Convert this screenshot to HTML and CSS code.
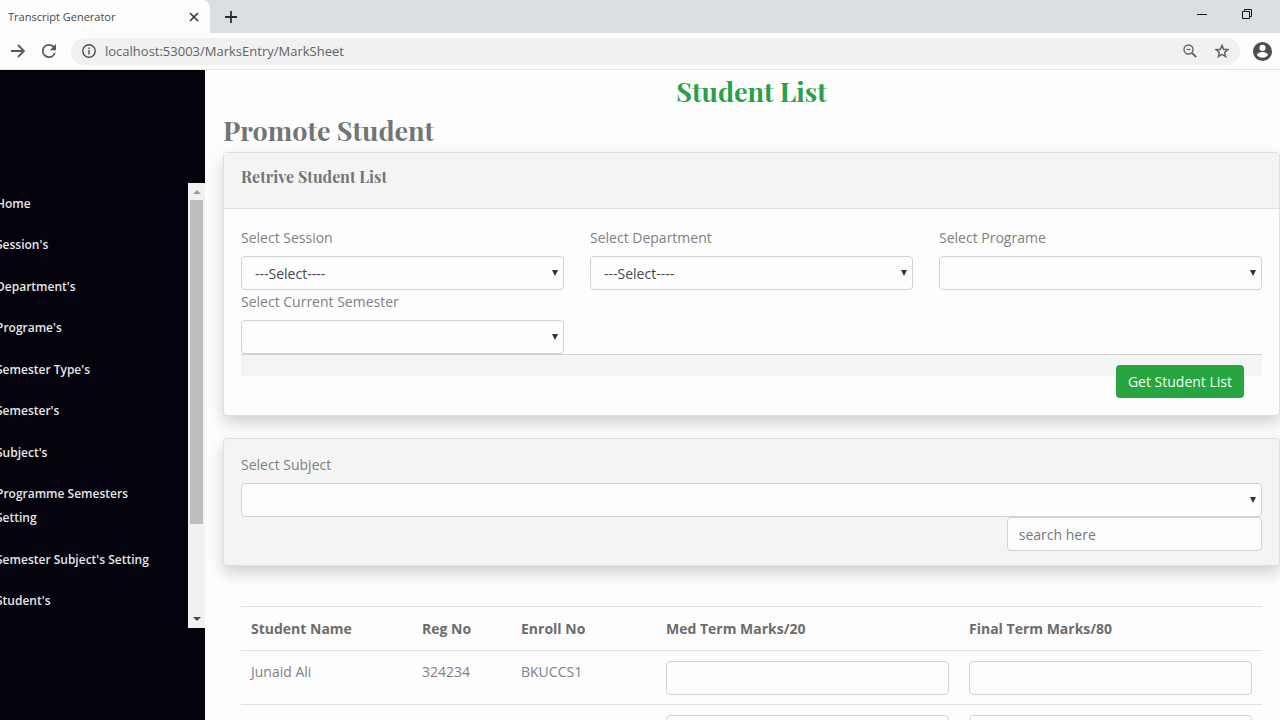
FILE: index.html
```html
<!DOCTYPE html>
<html lang="en">
<head>
    <meta charset="UTF-8">
    <meta name="viewport" content="width=device-width, initial-scale=1.0">
    <title>Transcript Generator</title>
    <link rel="stylesheet" href="styles.css">
</head>
<body>
    <!-- Browser Bar -->
    <header class="browser">
        <div class="tab-strip">
            <div class="tab">
                <span>Transcript Generator</span>
                <button class="icon-btn" aria-label="Close tab">
                    <svg width="10" height="10" viewBox="0 0 10 10" fill="none" stroke="#333" stroke-width="1.6"><path d="M1 1l8 8M9 1l-8 8"/></svg>
                </button>
            </div>
            <button class="icon-btn new-tab" aria-label="New tab">
                <svg width="12" height="12" viewBox="0 0 12 12" fill="none" stroke="#2b2d30" stroke-width="1.8"><path d="M6 0v12M0 6h12"/></svg>
            </button>
            <div class="window-btns">
                <button class="icon-btn" aria-label="Minimize">
                    <svg width="10" height="10" viewBox="0 0 10 10" stroke="#111"><path d="M0 5.5h10"/></svg>
                </button>
                <button class="icon-btn" aria-label="Restore">
                    <svg width="10" height="10" viewBox="0 0 10 10" fill="none" stroke="#111"><path d="M.5 2.5h7v7h-7zM2.5 2.5v-2h7v7h-2"/></svg>
                </button>
            </div>
        </div>
        <div class="toolbar">
            <button class="icon-btn" aria-label="Forward">
                <svg width="14" height="14" viewBox="0 0 14 14" fill="none" stroke="#55585c" stroke-width="1.8"><path d="M0 7h13M7 1l6 6-6 6"/></svg>
            </button>
            <button class="icon-btn" aria-label="Reload">
                <svg width="14" height="14" viewBox="4 4 16 16" fill="#55585c"><path d="M17.65 6.35A7.96 7.96 0 0 0 12 4a8 8 0 1 0 7.73 10h-2.08A6 6 0 1 1 12 6c1.66 0 3.14.69 4.22 1.78L13 11h7V4z"/></svg>
            </button>
            <div class="address">
                <svg width="14" height="14" viewBox="0 0 14 14" fill="none" stroke="#4c4f53" stroke-width="1.4"><circle cx="7" cy="7" r="6.2"/><path d="M7 6v4.5M7 3.4v1.5"/></svg>
                <input class="url" type="text" aria-label="Address" value="localhost:53003/MarksEntry/MarkSheet">
                <button class="icon-btn" aria-label="Zoom">
                    <svg width="14" height="14" viewBox="0 0 14 14" fill="none" stroke="#5f6368" stroke-width="1.4"><circle cx="5.5" cy="5.5" r="4.5"/><path d="M3.5 5.5h4" stroke-width="1.2"/><path d="M9 9l4.2 4.2" stroke-width="1.8"/></svg>
                </button>
                <button class="icon-btn" aria-label="Bookmark">
                    <svg width="14" height="14" viewBox="0 0 14 14" fill="none" stroke="#5f6368" stroke-width="1.5"><path d="M7 1.4l1.6 3.9 4.2.4-3.2 2.7 1 4.2L7 10.4l-3.6 2.2 1-4.2-3.2-2.7 4.2-.4z"/></svg>
                </button>
            </div>
            <button class="icon-btn" aria-label="Profile">
                <svg width="19" height="19" viewBox="2 2 20 20" fill="#4a4d51"><path d="M12 2a10 10 0 1 0 0 20 10 10 0 0 0 0-20zm0 3a3.2 3.2 0 1 1 0 6.4A3.2 3.2 0 0 1 12 5zm0 13.7a7 7 0 0 1-5.9-3c0-1.9 4-3.1 5.9-3.1s5.9 1.2 5.9 3.1a7 7 0 0 1-5.9 3z"/></svg>
            </button>
        </div>
    </header>

    <div class="page">
        <!-- Sidebar -->
        <aside class="sidebar">
            <nav>
                <a href="#">Home</a>
                <a href="#">Session's</a>
                <a href="#">Department's</a>
                <a href="#">Programe's</a>
                <a href="#">Semester Type's</a>
                <a href="#">Semester's</a>
                <a href="#">Subject's</a>
                <a href="#">Programme Semesters Setting</a>
                <a href="#">Semester Subject's Setting</a>
                <a href="#">Student's</a>
            </nav>
            <div class="scrollbar">
                <span class="arrow up"></span>
                <span class="thumb"></span>
                <span class="arrow down"></span>
            </div>
        </aside>

        <!-- Content -->
        <main>
            <h1 class="title">Student List</h1>
            <h2>Promote Student</h2>

            <section class="card">
                <div class="card-header">
                    <h3>Retrive Student List</h3>
                </div>
                <form class="card-body">
                    <div class="fields">
                        <div class="field">
                            <label for="session">Select Session</label>
                            <div class="select"><select id="session"><option>---Select----</option></select></div>
                        </div>
                        <div class="field">
                            <label for="department">Select Department</label>
                            <div class="select"><select id="department"><option>---Select----</option></select></div>
                        </div>
                        <div class="field">
                            <label for="programe">Select Programe</label>
                            <div class="select"><select id="programe"></select></div>
                        </div>
                        <div class="field">
                            <label for="semester">Select Current Semester</label>
                            <div class="select"><select id="semester"></select></div>
                        </div>
                    </div>
                    <div class="form-footer">
                        <button type="button" class="btn">Get Student List</button>
                    </div>
                </form>
            </section>

            <section class="card subject-card">
                <div class="field">
                    <label for="subject">Select Subject</label>
                    <div class="select"><select id="subject"></select></div>
                </div>
                <input class="search" type="text" placeholder="search here" aria-label="Search">
            </section>

            <table>
                <thead>
                    <tr>
                        <th class="col-name">Student Name</th>
                        <th class="col-reg">Reg No</th>
                        <th class="col-enroll">Enroll No</th>
                        <th>Med Term Marks/20</th>
                        <th>Final Term Marks/80</th>
                    </tr>
                </thead>
                <tbody>
                    <tr>
                        <td>Junaid Ali</td>
                        <td>324234</td>
                        <td>BKUCCS1</td>
                        <td><input type="text" aria-label="Med term marks"></td>
                        <td><input type="text" aria-label="Final term marks"></td>
                    </tr>
                    <tr>
                        <td></td>
                        <td></td>
                        <td></td>
                        <td><input type="text" aria-label="Med term marks"></td>
                        <td><input type="text" aria-label="Final term marks"></td>
                    </tr>
                </tbody>
            </table>
        </main>
    </div>
</body>
</html>
```
FILE: styles.css
```css
/* General Styles */
* {
    box-sizing: border-box;
}

body {
    margin: 0;
    height: 100vh;
    display: flex;
    flex-direction: column;
    overflow: hidden;
    font-family: 'Open Sans', sans-serif;
    font-size: 14px;
    line-height: 22px;
    color: #808080;
    background: #fdfdfd;
}

h1, h2, h3 {
    margin: 0;
    font-family: 'Playfair Display', 'Liberation Serif', serif;
    font-weight: bold;
    color: #727576;
}

input, select, button {
    font-family: inherit;
    font-size: 14px;
}

/* Browser Bar */
.browser {
    flex: none;
    border-bottom: 1px solid #e2e3e4;
}

.icon-btn {
    display: flex;
    padding: 0;
    border: none;
    background: none;
}

.tab-strip {
    display: flex;
    align-items: center;
    height: 33px;
    padding-right: 28px;
    background: #dadde2;
}

.tab {
    display: flex;
    align-items: center;
    justify-content: space-between;
    width: 210px;
    height: 33px;
    padding: 0 11px 0 8px;
    border-radius: 0 8px 0 0;
    background: #fdfdfd;
    font-size: 11px;
    color: #45484b;
}

.new-tab {
    margin-left: 15px;
}

.window-btns {
    display: flex;
    gap: 35px;
    margin-left: auto;
    margin-bottom: 5px;
}

.toolbar {
    display: flex;
    align-items: center;
    gap: 17px;
    height: 36px;
    padding: 0 8px 0 11px;
}

.address {
    flex: 1;
    display: flex;
    align-items: center;
    gap: 18px;
    height: 27px;
    margin: 0 -4px 0 -2px;
    padding: 0 11px;
    border-radius: 14px;
    background: #f0f1f0;
}

.url {
    flex: 1;
    margin-left: -9px;
    padding: 0;
    border: none;
    background: none;
    font-size: 13px;
    color: #5f6266;
}

/* Sidebar */
.page {
    flex: 1;
    display: flex;
    min-height: 0;
}

.sidebar {
    flex: none;
    display: flex;
    align-items: flex-start;
    width: 205px;
    padding-top: 113px;
    overflow: hidden;
    background: #04020c;
}

nav {
    flex: 1;
    display: flex;
    flex-direction: column;
    justify-content: space-between;
    height: 445px;
    margin-left: -4px;
    padding: 9px 32px 15px 0;
}

nav a {
    font-size: 12px;
    font-weight: 600;
    line-height: 24px;
    color: #e6e6e6;
    text-decoration: none;
}

.scrollbar {
    display: flex;
    flex-direction: column;
    align-items: center;
    width: 17px;
    height: 445px;
    background: #f0f1f1;
}

.arrow {
    height: 0;
    border: 4px solid transparent;
}

.arrow.up {
    margin: 3px 0 6px;
    border-bottom-color: #9a9c9c;
}

.arrow.down {
    margin: auto 0 3px;
    border-top-color: #46484a;
}

.thumb {
    width: 13px;
    height: 324px;
    background: #bdbfbf;
}

/* Content */
main {
    flex: 1;
    min-width: 0;
    padding: 3px 0 0 18px;
}

.title {
    font-size: 27px;
    line-height: 36px;
    text-align: center;
    color: #28a04b;
}

h2 {
    margin-bottom: 1px;
    font-size: 27px;
    line-height: 42px;
}

.card {
    margin-bottom: 22px;
    border: 1px solid #dfdfdf;
    border-radius: 4px;
    background: #fdfdfd;
    box-shadow: 0 7px 15px rgba(0, 0, 0, 0.18);
}

.card-header {
    height: 56px;
    padding: 12px 17px;
    border-bottom: 1px solid #dfdfdf;
    background: #f4f4f4;
}

h3 {
    font-size: 16px;
    line-height: 24px;
}

.card-body {
    padding: 18px 17px 17px;
}

.fields {
    display: grid;
    grid-template-columns: repeat(3, 1fr);
    gap: 1px 26px;
}

.field label {
    display: block;
    padding-bottom: 7px;
}

.select {
    position: relative;
}

/* Drop-down arrow */
.select::after {
    content: '';
    position: absolute;
    top: 14px;
    right: 6px;
    border: 3px solid transparent;
    border-top: 6px solid #333;
    border-bottom: none;
    pointer-events: none;
}

select, main input {
    display: block;
    width: 100%;
    height: 34px;
    padding: 0 11px;
    border: 1px solid #cfd2d4;
    border-radius: 4px;
    background: #fdfdfd;
    color: #44484c;
}

select {
    appearance: none;
    padding: 0 13px;
}

::placeholder {
    color: #75797d;
    opacity: 1;
}

.form-footer {
    height: 22px;
    margin-bottom: 22px;
    padding: 10px 18px;
    border-top: 1px solid #cfd0d0;
    background: #f4f4f4;
}

.btn {
    display: block;
    height: 33px;
    margin-left: auto;
    padding: 0 12px;
    border: none;
    border-radius: 4px;
    background: #26a541;
    color: #f4fff5;
}

.subject-card {
    padding: 15px 17px 14px;
    margin-bottom: 40px;
    background: #f4f4f4;
}

.subject-card .search {
    width: 25%;
    margin-left: auto;
}

/* Marks Table */
table {
    width: calc(100% - 36px);
    margin-left: 18px;
    border-collapse: collapse;
    table-layout: fixed;
}

th, td {
    padding: 10px 10px 9px;
    border-top: 1px solid #e0e1e2;
    text-align: left;
    vertical-align: top;
}

th {
    padding: 11px 10px 10px;
    color: #6c6c6c;
}

.col-name {
    width: 171px;
}

.col-reg {
    width: 99px;
}

.col-enroll {
    width: 145px;
}
```
